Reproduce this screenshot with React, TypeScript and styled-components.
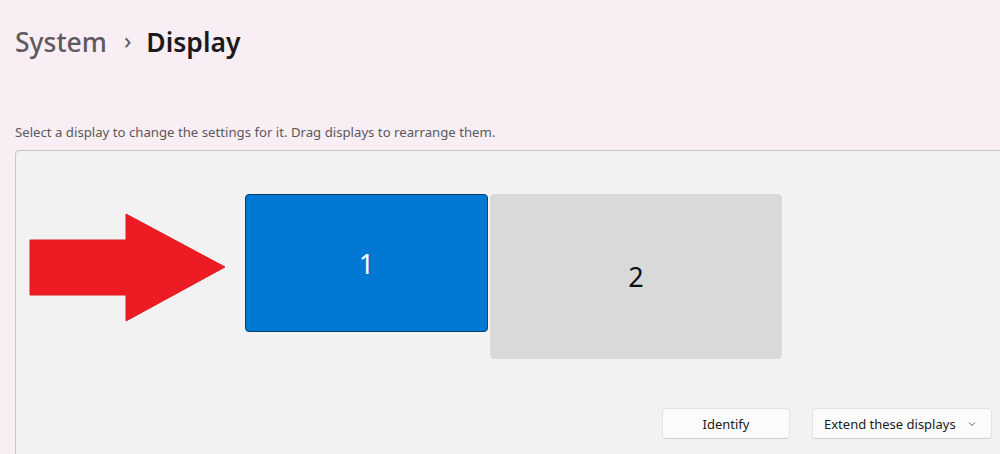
import styled, { createGlobalStyle } from "styled-components";

const GlobalStyle = createGlobalStyle`
  html, body {
    margin: 0;
    padding: 0;
    background: #f8eef4;
    font-family: "Noto Sans", "Open Sans", sans-serif;
  }
`;

type monitor = { id: string; left: number; top: number; width: number; height: number; active?: boolean };

const monitors: monitor[] = [
  { id: "1", left: 229, top: 43, width: 243, height: 138, active: true },
  { id: "2", left: 474, top: 43, width: 292, height: 165 },
];

const RedArrow = () => (
  <ArrowWrap width="197" height="110" viewBox="0 0 197 110">
    <path d="M1 27 H97 V1 L196 54 L97 108 V82 H1 Z" fill="#ed1c24" stroke="#e01b22" strokeWidth="1" strokeLinejoin="round" />
  </ArrowWrap>
);

const Chevron = () => (
  <svg width="10" height="10" viewBox="0 0 10 10">
    <path d="M2 3.5 L5 6.5 L8 3.5" fill="none" stroke="#5c5c5c" strokeWidth="1" />
  </svg>
);

const App = () => (
  <Page>
    <GlobalStyle />
    <Breadcrumb>
      <Parent>System</Parent>
      <Separator>›</Separator>
      <Current>Display</Current>
    </Breadcrumb>

    <Caption>Select a display to change the settings for it. Drag displays to rearrange them.</Caption>

    <Panel>
      <Canvas>
        <RedArrow />
        {monitors.map((m) => (
          <Monitor
            key={m.id}
            $active={m.active}
            style={{ left: m.left, top: m.top, width: m.width, height: m.height }}
          >
            {m.id}
          </Monitor>
        ))}
      </Canvas>

      <Actions>
        <Button $width={128}>Identify</Button>
        <Dropdown>
          <span>Extend these displays</span>
          <Chevron />
        </Dropdown>
      </Actions>
    </Panel>
  </Page>
);

const Page = styled.div`
  width: 1000px;
  height: 454px;
  overflow: hidden;
  padding: 22px 0 0 15px;
  box-sizing: border-box;
`;

const Breadcrumb = styled.div`
  display: flex;
  align-items: center;
  font-size: 26.5px;
  line-height: 40px;
`;

const Parent = styled.span`
  color: #5e5a5f;
  font-weight: 500;
`;

const Separator = styled.span`
  color: #5e5a5f;
  font-size: 24px;
  line-height: 40px;
  margin: -4px 15px 0 17px;
`;

const Current = styled.span`
  color: #1b1a1c;
  font-weight: 600;
`;

const Caption = styled.div`
  margin-top: 61px;
  font-size: 13.2px;
  line-height: 18px;
  color: #5b585c;
`;

const Panel = styled.div`
  margin-top: 9px;
  width: 1010px;
  height: 320px;
  box-sizing: border-box;
  background: #f2f2f2;
  border: 1px solid #c9c4c8;
  border-radius: 4px;
  padding-right: 32px;
`;

const Canvas = styled.div`
  position: relative;
  height: 257px;
`;

const ArrowWrap = styled.svg`
  position: absolute;
  left: 13px;
  top: 62px;
`;

const Monitor = styled.div<{ $active?: boolean }>`
  position: absolute;
  box-sizing: border-box;
  display: flex;
  align-items: center;
  justify-content: center;
  border-radius: 4px;
  font-size: 27px;
  background: ${({ $active }) => ($active ? "#0078d4" : "#d9d9d9")};
  color: ${({ $active }) => ($active ? "#ffffff" : "#111111")};
  border: 1px solid ${({ $active }) => ($active ? "#0b3d6b" : "#d9d9d9")};
`;

const Actions = styled.div`
  display: flex;
  justify-content: flex-end;
  gap: 22px;
`;

const Button = styled.div<{ $width: number }>`
  width: ${({ $width }) => $width}px;
  height: 31px;
  box-sizing: border-box;
  display: flex;
  align-items: center;
  justify-content: center;
  background: #fbfbfb;
  border: 1px solid #e3e3e3;
  border-bottom-color: #d0d0d0;
  border-radius: 4px;
  font-size: 13px;
  color: #1b1b1b;
`;

const Dropdown = styled(Button).attrs({ $width: 180 })`
  justify-content: space-between;
  padding: 0 14px 0 11px;
`;

export default App;
